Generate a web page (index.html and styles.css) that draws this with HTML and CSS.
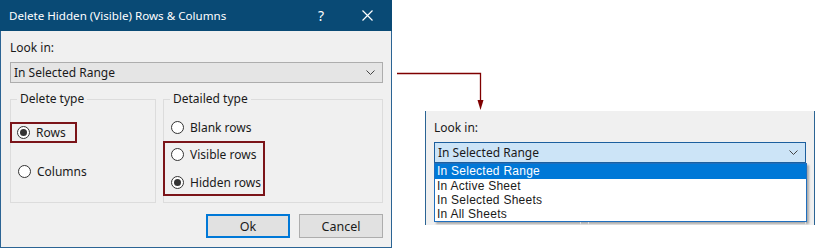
FILE: index.html
```html
<!DOCTYPE html>
<html lang="en">

<head>
    <meta charset="UTF-8">
    <title>Delete Hidden (Visible) Rows &amp; Columns</title>
    <link rel="stylesheet" href="styles.css">
</head>

<body>
    <div class="dialog">
        <div class="titlebar">
            <span class="title">Delete Hidden (Visible) Rows &amp; Columns</span>
            <span class="help">?</span>
            <svg class="close" width="11" height="11" viewBox="0 0 11 11">
                <path d="M0.5 0.5 L10.5 10.5 M10.5 0.5 L0.5 10.5" stroke="#fff" stroke-width="1.2" />
            </svg>
        </div>
        <div class="content">
            <div class="label">Look in:</div>
            <div class="combo">
                <span>In Selected Range</span>
                <svg class="chev" width="9" height="5" viewBox="0 0 9 5">
                    <polyline points="0.5,0.5 4.5,4.5 8.5,0.5" fill="none" stroke="#444" stroke-width="1" />
                </svg>
            </div>

            <div class="groups">
                <fieldset class="group delete-group">
                    <legend>Delete type</legend>
                    <div class="option marked rows-opt"><span class="radio checked"></span>Rows</div>
                    <div class="option cols-opt"><span class="radio"></span>Columns</div>
                </fieldset>
                <fieldset class="group detail-group">
                    <legend>Detailed type</legend>
                    <div class="option blank-opt"><span class="radio"></span>Blank rows</div>
                    <div class="marked pair">
                        <div class="option"><span class="radio"></span>Visible rows</div>
                        <div class="option"><span class="radio checked"></span>Hidden rows</div>
                    </div>
                </fieldset>
            </div>

            <div class="buttons">
                <button class="btn btn-ok">Ok</button>
                <button class="btn">Cancel</button>
            </div>
        </div>
    </div>

    <div class="side">
        <svg class="connector" width="100" height="111" viewBox="0 0 100 111">
            <polyline points="5,73.5 88.5,73.5 88.5,102" fill="none" stroke="#7f0000" stroke-width="1.3" />
            <polygon points="85.5,100 91.5,100 88.5,110" fill="#7f0000" />
        </svg>
        <div class="panel">
            <div class="label">Look in:</div>
            <div class="combo open">
                <span>In Selected Range</span>
                <svg class="chev" width="9" height="5" viewBox="0 0 9 5">
                    <polyline points="0.5,0.5 4.5,4.5 8.5,0.5" fill="none" stroke="#444" stroke-width="1" />
                </svg>
            </div>
            <ul class="droplist">
                <li class="selected">In Selected Range</li>
                <li>In Active Sheet</li>
                <li>In Selected Sheets</li>
                <li>In All Sheets</li>
            </ul>
            <div class="stub">
                <div class="stub-left"></div>
                <div class="stub-right"></div>
            </div>
        </div>
    </div>
</body>

</html>
```

FILE: styles.css
```css
/* Reset */
* {
    margin: 0;
    padding: 0;
    box-sizing: border-box;
}

body {
    font-family: 'Noto Sans', 'Liberation Sans', sans-serif;
    font-size: 12px;
    color: #1a1a1a;
    background: #fff;
    display: flex;
    width: 816px;
    height: 249px;
    overflow: hidden;
}

/* Main dialog */
.dialog {
    width: 392px;
    height: 248px;
    background: #f0f0f0;
    border: 1px solid #2b6494;
    border-top: none;
    display: flex;
    flex-direction: column;
}

.titlebar {
    height: 31px;
    background: #094a75;
    color: #fff;
    display: flex;
    align-items: center;
    padding-left: 9px;
    margin: 0 -1px;
}

.title {
    flex: 1;
    font-size: 11.6px;
}

.help {
    font-size: 14px;
    margin-right: 38px;
}

.close {
    margin-right: 19px;
}

.content {
    padding: 8px 8px 0 9px;
}

.label {
    line-height: 17px;
}

.combo {
    margin-top: 6px;
    height: 21px;
    background: #e5e5e5;
    border: 1px solid #adadad;
    display: flex;
    align-items: center;
    justify-content: space-between;
    padding: 0 7px 0 3px;
}

.combo.open {
    background: #cce4f7;
    border-color: #1c5f9e;
}

/* Group boxes */
.groups {
    display: flex;
    gap: 7px;
    margin-top: 9px;
}

.group {
    border: 1px solid #dcdcdc;
    padding: 0 0 6px 0;
}

.group legend {
    margin-left: 6px;
    padding: 0 3px;
    line-height: 14px;
}

.delete-group {
    width: 146px;
}

.detail-group {
    flex: 1;
}

.option {
    display: flex;
    align-items: center;
    height: 21px;
    padding-left: 6px;
    border: 2px solid transparent;
    margin-left: -1px;
}

.marked {
    border: 2px solid #7b1419;
}

.rows-opt {
    width: 67px;
    margin-top: 16px;
    padding-left: 5px;
}

.cols-opt {
    margin-top: 18px;
}

.blank-opt {
    margin-top: 11px;
}

.pair {
    width: 102px;
    margin-top: 3px;
    margin-left: -1px;
    padding: 1px 0;
}

.pair .option {
    border: none;
    margin-left: 0;
    padding-left: 6px;
}

.pair .option + .option {
    margin-top: 7px;
}

.radio {
    width: 13px;
    height: 13px;
    border: 1px solid #333;
    border-radius: 50%;
    background: #fff;
    margin-right: 6px;
    display: flex;
    align-items: center;
    justify-content: center;
}

.radio.checked::after {
    content: "";
    width: 7px;
    height: 7px;
    border-radius: 50%;
    background: #333;
}

/* Buttons */
.buttons {
    display: flex;
    justify-content: flex-end;
    gap: 9px;
    margin-top: 11px;
}

.btn {
    width: 84px;
    height: 24px;
    background: #e1e1e1;
    border: 1px solid #adadad;
    font-family: inherit;
    font-size: 12.5px;
    color: #1a1a1a;
}

.btn-ok {
    border: 2px solid #0078d7;
}

/* Zoomed drop-down on the right */
.side {
    flex: 1;
    display: flex;
    flex-direction: column;
}

.connector {
    display: block;
}

.panel {
    margin-left: 33px;
    width: 390px;
    height: 114px;
    background: #f0f0f0;
    border-left: 1px solid #2b6494;
    border-right: 1px solid #2b6494;
    padding: 8px 8px 0 8px;
    overflow: hidden;
}

.droplist {
    list-style: none;
    background: #fff;
    border: 1px solid #1f6fbf;
    box-shadow: 2px 2px 2px rgba(0, 0, 0, 0.3);
    margin-right: -1px;
    font-family: 'Liberation Sans', Arial, sans-serif;
    letter-spacing: 0.25px;
}

.droplist li {
    line-height: 14px;
    padding-left: 2px;
}

.droplist li.selected {
    background: #0078d7;
    color: #fff;
    line-height: 15px;
}

.stub {
    display: flex;
    gap: 7px;
    height: 10px;
}

.stub-left {
    width: 147px;
    border-right: 1px solid #dcdcdc;
}

.stub-right {
    flex: 1;
    border-left: 1px solid #dcdcdc;
    border-right: 1px solid #dcdcdc;
}
```
